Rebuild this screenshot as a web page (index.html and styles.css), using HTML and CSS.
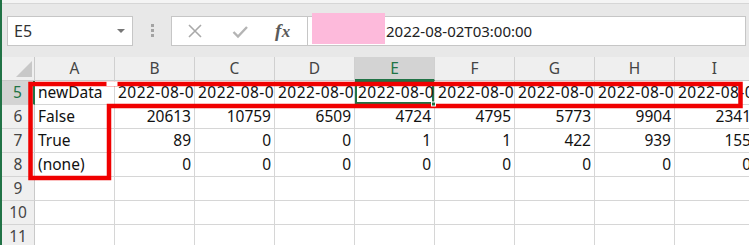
FILE: index.html
```html
<!DOCTYPE html>
<html>
<head>
<meta charset="utf-8">
<link rel="stylesheet" href="styles.css">
</head>
<body>
<div class="app">
  <div class="topstrip"></div>
  <div class="toolbar">
    <div class="namebox"><span>E5</span><span class="caret"></span></div>
    <div class="grip"><i></i><i></i><i></i></div>
    <div class="fxbox">
      <svg class="ico-x" width="16" height="14" viewBox="0 0 16 14"><path d="M2 1 L14 13 M14 1 L2 13" stroke="#a9a9a9" stroke-width="1.6" fill="none"/></svg>
      <svg class="ico-ok" width="16" height="14" viewBox="0 0 16 14"><path d="M1.5 7 L6 11.5 L15 2" stroke="#b4b4b4" stroke-width="2.4" fill="none"/></svg>
      <span class="fx">f<span class="fxx">x</span></span>
    </div>
    <div class="formula">2022-08-02T03:00:00</div>
  </div>
  <div class="grid">
    <div class="row head">
      <div class="rh corner"><svg width="16" height="16" viewBox="0 0 16 16"><path d="M16 0 L16 16 L0 16 Z" fill="#c8c8c8"/></svg></div>
      <div class="ch">A</div><div class="ch">B</div><div class="ch">C</div><div class="ch">D</div><div class="ch on">E</div><div class="ch">F</div><div class="ch">G</div><div class="ch">H</div><div class="ch">I</div>
    </div>
    <div class="row">
      <div class="rh on">5</div>
      <div class="c">newData</div>
      <div class="c d">2022-08-02T00:00:00</div>
      <div class="c d">2022-08-02T01:00:00</div>
      <div class="c d">2022-08-02T02:00:00</div>
      <div class="c d sel">2022-08-02T03:00:00</div>
      <div class="c d">2022-08-02T04:00:00</div>
      <div class="c d">2022-08-02T05:00:00</div>
      <div class="c d">2022-08-02T06:00:00</div>
      <div class="c d">2022-08-02T07:00:00</div>
    </div>
    <div class="row">
      <div class="rh">6</div>
      <div class="c">False</div>
      <div class="c n">20613</div><div class="c n">10759</div><div class="c n">6509</div><div class="c n">4724</div><div class="c n">4795</div><div class="c n">5773</div><div class="c n">9904</div><div class="c n">2341</div>
    </div>
    <div class="row">
      <div class="rh">7</div>
      <div class="c">True</div>
      <div class="c n">89</div><div class="c n">0</div><div class="c n">0</div><div class="c n">1</div><div class="c n">1</div><div class="c n">422</div><div class="c n">939</div><div class="c n">155</div>
    </div>
    <div class="row">
      <div class="rh">8</div>
      <div class="c">(none)</div>
      <div class="c n">0</div><div class="c n">0</div><div class="c n">0</div><div class="c n">0</div><div class="c n">0</div><div class="c n">0</div><div class="c n">0</div><div class="c n">0</div>
    </div>
    <div class="row">
      <div class="rh">9</div>
      <div class="c"></div><div class="c"></div><div class="c"></div><div class="c"></div><div class="c"></div><div class="c"></div><div class="c"></div><div class="c"></div><div class="c"></div>
    </div>
    <div class="row">
      <div class="rh">10</div>
      <div class="c"></div><div class="c"></div><div class="c"></div><div class="c"></div><div class="c"></div><div class="c"></div><div class="c"></div><div class="c"></div><div class="c"></div>
    </div>
    <div class="row">
      <div class="rh">11</div>
      <div class="c"></div><div class="c"></div><div class="c"></div><div class="c"></div><div class="c"></div><div class="c"></div><div class="c"></div><div class="c"></div><div class="c"></div>
    </div>
  </div>
  <div class="redact"></div>
  <svg class="annot" width="749" height="245" viewBox="0 0 749 245">
    <path d="M30.5 84 L740.5 84 L740.5 106 L109 106 L109 178 L30.5 178 Z" fill="none" stroke="#f00000" stroke-width="4.5" stroke-linejoin="miter"/>
    <rect x="106.5" y="81.5" width="11" height="4.5" fill="#ffffff"/>
    <rect x="431.5" y="102" width="4" height="4" fill="#217346" stroke="#ffffff" stroke-width="1"/>
  </svg>
</div>
</body>
</html>
```
FILE: styles.css
```css
html, body {
  margin: 0;
  padding: 0;
}
body {
  background: #e8e8e8;
}
.app {
  position: relative;
  width: 749px;
  height: 245px;
  overflow: hidden;
  box-sizing: border-box;
  border-left: 2px solid #217346;
  background: #e8e8e8;
  font-family: "Noto Sans", "Open Sans", sans-serif;
  color: #1a1a1a;
}
.topstrip {
  height: 3px;
  background: #f4f4f4;
  border-bottom: 1px solid #d6d6d6;
}
.toolbar {
  display: flex;
  align-items: flex-start;
  height: 53px;
  box-sizing: border-box;
  padding-top: 12px;
  padding-left: 5px;
}
.namebox {
  width: 126px;
  height: 30px;
  box-sizing: border-box;
  border: 1px solid #c6c6c6;
  background: #fff;
  display: flex;
  align-items: center;
  justify-content: space-between;
  padding: 0 7px 0 6px;
  font-size: 16px;
  color: #333;
  flex: none;
}
.caret {
  width: 0;
  height: 0;
  border-left: 4px solid transparent;
  border-right: 4px solid transparent;
  border-top: 4px solid #777;
}
.grip {
  display: flex;
  flex-direction: column;
  gap: 2px;
  margin: 8px 0 0 18px;
  flex: none;
}
.grip i {
  display: block;
  width: 3px;
  height: 3px;
  background: #a3a3a3;
}
.fxbox {
  width: 137px;
  height: 30px;
  box-sizing: border-box;
  border: 1px solid #c6c6c6;
  background: #fff;
  margin-left: 17px;
  display: flex;
  align-items: center;
  flex: none;
}
.ico-x {
  margin-left: 15px;
  flex: none;
}
.ico-ok {
  margin-left: 29px;
  margin-top: 2px;
  flex: none;
}
.fx {
  margin-left: 27px;
  font-family: "Liberation Serif", "DejaVu Serif", serif;
  font-style: italic;
  font-weight: bold;
  font-size: 19px;
  color: #5a5a5a;
  letter-spacing: 0.5px;
}
.fxx {
  font-size: 17px;
}
.formula {
  width: 438px;
  height: 30px;
  box-sizing: border-box;
  border: 1px solid #c6c6c6;
  border-left: none;
  background: #fff;
  padding-left: 78px;
  font-size: 15px;
  line-height: 28px;
  color: #222;
  flex: none;
  white-space: nowrap;
}
.grid {
  display: flex;
  flex-direction: column;
}
.row {
  display: flex;
  height: 24px;
  width: max-content;
  font-size: 15.5px;
  line-height: 23px;
}
.rh {
  width: 33px;
  flex: none;
  box-sizing: border-box;
  border-right: 1px solid #c9c9c9;
  border-bottom: 1px solid #d4d4d4;
  background: #efefef;
  text-align: center;
  color: #444;
}
.rh.on {
  background: #d3d3d3;
  color: #217346;
  border-right: 2px solid #217346;
}
.corner {
  display: flex;
  align-items: flex-end;
  justify-content: flex-end;
  padding: 0 2px 3px 0;
  border-bottom: 1px solid #c9c9c9;
}
.ch {
  width: 80px;
  flex: none;
  box-sizing: border-box;
  border-right: 1px solid #d0d0d0;
  border-bottom: 1px solid #c9c9c9;
  background: #efefef;
  text-align: center;
  color: #444;
}
.ch.on {
  background: #d3d3d3;
  color: #217346;
  border-bottom: 2px solid #217346;
}
.c {
  width: 80px;
  flex: none;
  box-sizing: border-box;
  border-right: 1px solid #d6d6d6;
  border-bottom: 1px solid #d6d6d6;
  background: #fff;
  padding: 0 3px;
  overflow: hidden;
  white-space: nowrap;
  color: #111;
}
.d {
  letter-spacing: 0.45px;
}
.n {
  text-align: right;
}
.sel {
  box-shadow: inset 0 0 0 2px #217346;
}
.redact {
  position: absolute;
  left: 310px;
  top: 13px;
  width: 73px;
  height: 31px;
  background: #fdbadb;
}
.annot {
  position: absolute;
  left: -2px;
  top: 0;
}
```
